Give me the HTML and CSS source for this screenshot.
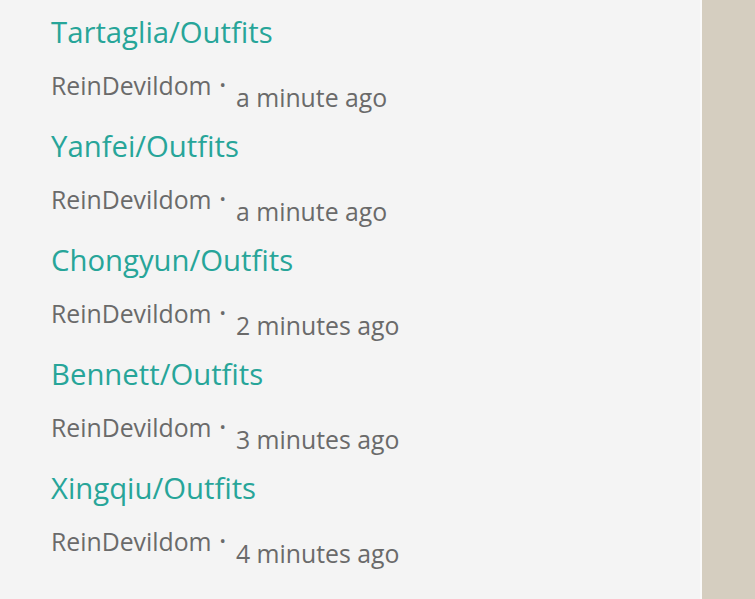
FILE: index.html
```html
<html><head>
<meta charset="UTF-8"><link rel="stylesheet" href="styles.css">
</head><body>
<div class="page">
<div class="panel">
<ul class="recent">
<li><a class="title" href="#">Tartaglia/Outfits</a>
<div class="meta"><span class="user">ReinDevildom</span><span class="dot">•</span><span class="time">a minute ago</span></div></li>
<li><a class="title" href="#">Yanfei/Outfits</a>
<div class="meta"><span class="user">ReinDevildom</span><span class="dot">•</span><span class="time">a minute ago</span></div></li>
<li><a class="title" href="#">Chongyun/Outfits</a>
<div class="meta"><span class="user">ReinDevildom</span><span class="dot">•</span><span class="time">2 minutes ago</span></div></li>
<li><a class="title" href="#">Bennett/Outfits</a>
<div class="meta"><span class="user">ReinDevildom</span><span class="dot">•</span><span class="time">3 minutes ago</span></div></li>
<li><a class="title" href="#">Xingqiu/Outfits</a>
<div class="meta"><span class="user">ReinDevildom</span><span class="dot">•</span><span class="time">4 minutes ago</span></div></li>
</ul>
</div>
<div class="side"></div>
</div>
</body></html>
```

FILE: styles.css
```css
html, body { margin: 0; height: 100%; }
body { font-family: "Open Sans", "Noto Sans", sans-serif; }
.page { display: flex; height: 599px; overflow: hidden; }
.panel { width: 700px; background: #f4f4f4; border-right: 2px solid #fafafa; }
.side { flex: 1; background: #d5cec0; }
.recent { list-style: none; margin: 0; padding: 12px 0 0 51px; }
.recent li { height: 114px; }
.title { display: block; color: #27a599; text-decoration: none; font-size: 29.3px; line-height: 40px; }
.meta { display: flex; align-items: flex-start; color: #6a6a6a; font-size: 24.8px; margin-top: 18px; }
.user { line-height: 30px; }
.dot { font-size: 17px; line-height: 30px; margin: 0 10px 0 8px; }
.time { line-height: 30px; margin-top: 12px; }
```
